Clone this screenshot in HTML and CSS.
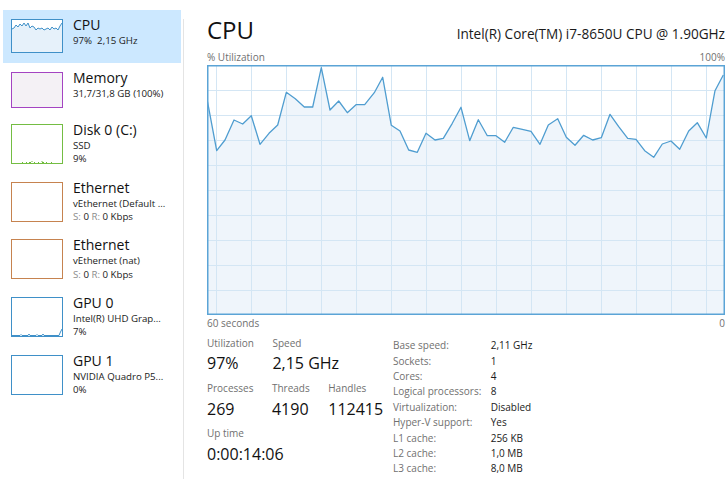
FILE: index.html
```html
<!DOCTYPE html>
<html lang="en">
<head>
<meta charset="utf-8">
<title>Task Manager - CPU</title>
<link rel="stylesheet" href="styles.css">
</head>
<body>
<div class="app">
  <nav class="sidebar">
    <div class="item short selected">
      <div class="thumb thumb-cpu">
        <svg width="50" height="32" viewBox="0 0 50 32">
          <polygon points="0,9 2,8 4,5 6,7 8,4 10,6 12,3 14,6 16,3 18,8 20,6 22,7 24,10 26,8 28,9 30,8 32,10 34,9 36,8 38,10 40,7 42,9 44,8 46,10 48,6 50,3 50,32 0,32" fill="#e6f1fa"/>
          <polyline points="0,9 2,8 4,5 6,7 8,4 10,6 12,3 14,6 16,3 18,8 20,6 22,7 24,10 26,8 28,9 30,8 32,10 34,9 36,8 38,10 40,7 42,9 44,8 46,10 48,6 50,3" fill="none" stroke="#3f90c8" stroke-width="1"/>
        </svg>
      </div>
      <div class="item-text">
        <div class="item-title">CPU</div>
        <div class="item-sub">97%&nbsp; 2,15 GHz</div>
      </div>
    </div>
    <div class="item short">
      <div class="thumb thumb-mem"></div>
      <div class="item-text">
        <div class="item-title">Memory</div>
        <div class="item-sub">31,7/31,8 GB (100%)</div>
      </div>
    </div>
    <div class="item">
      <div class="thumb thumb-disk">
        <svg width="50" height="38" viewBox="0 0 50 38">
          <path d="M10 37.5h1M14 37.5h1M17 37.5h2M22 37.5h1M26 37.5h1M30 37.5h2M34 37.5h1M39 37.5h1" stroke="#6dbb3a" stroke-width="1"/>
          <path d="M20 37v-1M30 37v-1" stroke="#6dbb3a" stroke-width="1"/>
        </svg>
      </div>
      <div class="item-text">
        <div class="item-title">Disk 0 (C:)</div>
        <div class="item-sub">SSD</div>
        <div class="item-sub">9%</div>
      </div>
    </div>
    <div class="item">
      <div class="thumb thumb-eth"></div>
      <div class="item-text">
        <div class="item-title">Ethernet</div>
        <div class="item-sub">vEthernet (Default ...</div>
        <div class="item-sub"><span class="dim">S:</span> 0 <span class="dim">R:</span> 0 Kbps</div>
      </div>
    </div>
    <div class="item">
      <div class="thumb thumb-eth"></div>
      <div class="item-text">
        <div class="item-title">Ethernet</div>
        <div class="item-sub">vEthernet (nat)</div>
        <div class="item-sub"><span class="dim">S:</span> 0 <span class="dim">R:</span> 0 Kbps</div>
      </div>
    </div>
    <div class="item">
      <div class="thumb thumb-gpu">
        <svg width="50" height="38" viewBox="0 0 50 38">
          <polyline points="0,37.5 8,37.5 9,36.5 10,37.5 16,37.5 17,36 18,37.5 24,37.5 25,36.5 26,37.5 30,37.5 31,36 32,37.5 47,37.5 48,35 49,33 50,31" fill="none" stroke="#3f90c8" stroke-width="1"/>
        </svg>
      </div>
      <div class="item-text">
        <div class="item-title">GPU 0</div>
        <div class="item-sub">Intel(R) UHD Grap...</div>
        <div class="item-sub">7%</div>
      </div>
    </div>
    <div class="item">
      <div class="thumb thumb-gpu"></div>
      <div class="item-text">
        <div class="item-title">GPU 1</div>
        <div class="item-sub">NVIDIA Quadro P5...</div>
        <div class="item-sub">0%</div>
      </div>
    </div>
  </nav>
  <div class="divider"></div>
  <main class="main">
    <div class="header">
      <h1 class="title">CPU</h1>
      <div class="cpu-name">Intel(R) Core(TM) i7-8650U CPU @ 1.90GHz</div>
    </div>
    <div class="axis-row axis-top">
      <span>% Utilization</span>
      <span>100%</span>
    </div>
    <svg class="chart" width="518" height="250" viewBox="0 0 518 250">
      <polygon fill="#eff5fb" points="0.5,36.7 9.7,85.7 18,75 27,55 35.7,59 44.3,50.7 53,79.3 62,68.3 70.7,60 79.3,27.3 88.3,33.7 97.3,42 105.7,42 114.3,2.7 123,45 131.7,36 140.3,47.7 149,39.7 157.7,39.7 167.3,27.7 175.7,12.3 184.3,60.3 193,66 201.7,85 210.3,87.3 219,68.3 228,75 236.3,73.3 245.3,58.3 254,42.3 262.7,75.7 271.3,54.7 280.3,70.7 289,70.7 297.7,77.3 306.3,62.3 315.3,64.3 324,66.3 333,79.3 341.3,60 350.7,53.7 359.3,72.3 368,80.3 376.7,70.3 385.7,75 394.3,72.7 403,49.3 411.7,61.7 420.7,73.3 429,74.3 437.7,85.7 446.7,92.3 455.3,79 464,76 472.7,84.3 481.7,66 490.3,57.7 499.3,73 508,25.7 516.3,10 517,250 0.5,250"/>
      <g stroke="#d4e6f4" stroke-width="1">
        <path d="M9.5 0V250M44.5 0V250M79.5 0V250M114.5 0V250M149.5 0V250M184.5 0V250M219.5 0V250M254.5 0V250M289.5 0V250M324.5 0V250M359.5 0V250M394.5 0V250M429.5 0V250M464.5 0V250M499.5 0V250"/>
        <path d="M0 25.5H518M0 50.5H518M0 75.5H518M0 100.5H518M0 125.5H518M0 150.5H518M0 175.5H518M0 200.5H518M0 225.5H518"/>
      </g>
      <polyline fill="none" stroke="#4f9dd0" stroke-width="1.3" stroke-linejoin="round" points="0.5,36.7 9.7,85.7 18,75 27,55 35.7,59 44.3,50.7 53,79.3 62,68.3 70.7,60 79.3,27.3 88.3,33.7 97.3,42 105.7,42 114.3,2.7 123,45 131.7,36 140.3,47.7 149,39.7 157.7,39.7 167.3,27.7 175.7,12.3 184.3,60.3 193,66 201.7,85 210.3,87.3 219,68.3 228,75 236.3,73.3 245.3,58.3 254,42.3 262.7,75.7 271.3,54.7 280.3,70.7 289,70.7 297.7,77.3 306.3,62.3 315.3,64.3 324,66.3 333,79.3 341.3,60 350.7,53.7 359.3,72.3 368,80.3 376.7,70.3 385.7,75 394.3,72.7 403,49.3 411.7,61.7 420.7,73.3 429,74.3 437.7,85.7 446.7,92.3 455.3,79 464,76 472.7,84.3 481.7,66 490.3,57.7 499.3,73 508,25.7 516.3,10"/>
      <rect x="0.75" y="0.75" width="516.5" height="248.5" fill="none" stroke="#5ba4d6" stroke-width="1.5"/>
    </svg>
    <div class="axis-row axis-bottom">
      <span>60 seconds</span>
      <span>0</span>
    </div>
    <section class="stats">
      <div class="stats-left">
        <div class="stat-row">
          <div class="stat"><div class="stat-label">Utilization</div><div class="stat-value">97%</div></div>
          <div class="stat"><div class="stat-label">Speed</div><div class="stat-value">2,15 GHz</div></div>
        </div>
        <div class="stat-row">
          <div class="stat"><div class="stat-label">Processes</div><div class="stat-value">269</div></div>
          <div class="stat"><div class="stat-label">Threads</div><div class="stat-value">4190</div></div>
          <div class="stat"><div class="stat-label">Handles</div><div class="stat-value">112415</div></div>
        </div>
        <div class="stat-row">
          <div class="stat"><div class="stat-label">Up time</div><div class="stat-value">0:00:14:06</div></div>
        </div>
      </div>
      <dl class="specs">
        <dt class="spec-label">Base speed:</dt><dd class="spec-value">2,11 GHz</dd>
        <dt class="spec-label">Sockets:</dt><dd class="spec-value">1</dd>
        <dt class="spec-label">Cores:</dt><dd class="spec-value">4</dd>
        <dt class="spec-label">Logical processors:</dt><dd class="spec-value">8</dd>
        <dt class="spec-label">Virtualization:</dt><dd class="spec-value">Disabled</dd>
        <dt class="spec-label">Hyper-V support:</dt><dd class="spec-value">Yes</dd>
        <dt class="spec-label">L1 cache:</dt><dd class="spec-value">256 KB</dd>
        <dt class="spec-label">L2 cache:</dt><dd class="spec-value">1,0 MB</dd>
        <dt class="spec-label">L3 cache:</dt><dd class="spec-value">8,0 MB</dd>
      </dl>
    </section>
  </main>
</div>
</body>
</html>
```

FILE: styles.css
```css
* { box-sizing: border-box; }
html, body { margin: 0; padding: 0; background: #fff; }
body {
  font-family: "Open Sans", "Noto Sans", sans-serif;
  color: #1a1a1a;
  width: 727px;
  height: 479px;
  overflow: hidden;
}
.app { display: flex; height: 479px; }

.sidebar {
  width: 183px;
  flex: none;
  padding: 10px 2px 0 3px;
  display: flex;
  flex-direction: column;
}
.item { display: flex; height: 57.7px; padding-left: 8px; flex: none; }
.item.short { height: 52.5px; }
.item.selected { background: #cce8ff; }
.thumb {
  width: 52px;
  height: 40px;
  margin-top: 9px;
  border: 1px solid #3f90c8;
  background: #fff;
  flex: none;
}
.thumb svg { display: block; }
.thumb-cpu { height: 34px; border-color: #3f90c8; }
.thumb-mem { height: 36px; border-color: #a444c2; background: #f4f1f5; }
.thumb-disk { border-color: #74bd43; }
.thumb-eth { border-color: #c6834f; }
.thumb-gpu { border-color: #3f90c8; }
.item-text { margin-left: 10px; padding-top: 5px; white-space: nowrap; }
.item-title { font-size: 14px; line-height: 19.1px; color: #111; }
.item-sub { font-size: 9.7px; line-height: 13.3px; color: #1a1a1a; }
.dim { color: #8c8c8c; }

.divider { width: 1px; flex: none; background: #e4e4e4; margin-top: 19px; }

.main { width: 518px; margin-left: 23px; flex: none; }
.header {
  display: flex;
  justify-content: space-between;
  align-items: baseline;
  margin-top: 15px;
  height: 30px;
}
.title { margin: 0; font-size: 24px; line-height: 30px; font-weight: 400; color: #111; }
.cpu-name { font-size: 13.6px; color: #1a1a1a; }
.axis-row {
  display: flex;
  justify-content: space-between;
  font-size: 10px;
  line-height: 13.7px;
  color: #707070;
}
.axis-top { margin-top: 5.6px; }
.chart { display: block; margin-top: 0.7px; }
.axis-bottom { margin-top: 1.6px; }

.stats { display: flex; margin-top: 6.4px; }
.stats-left { width: 186px; flex: none; display: flex; flex-direction: column; gap: 4.5px; }
.stat-row { display: flex; gap: 18.5px; }
.stat-label { font-size: 10px; line-height: 13.7px; color: #707070; }
.stat-value { font-size: 16px; line-height: 27px; color: #111; white-space: nowrap; }

.specs {
  margin: 1.5px 0 0;
  display: grid;
  grid-template-columns: 97.7px auto;
  font-size: 10px;
  line-height: 15.4px;
}
.specs dt, .specs dd { margin: 0; white-space: nowrap; }
.spec-label { color: #707070; }
.spec-value { color: #1a1a1a; }
```
